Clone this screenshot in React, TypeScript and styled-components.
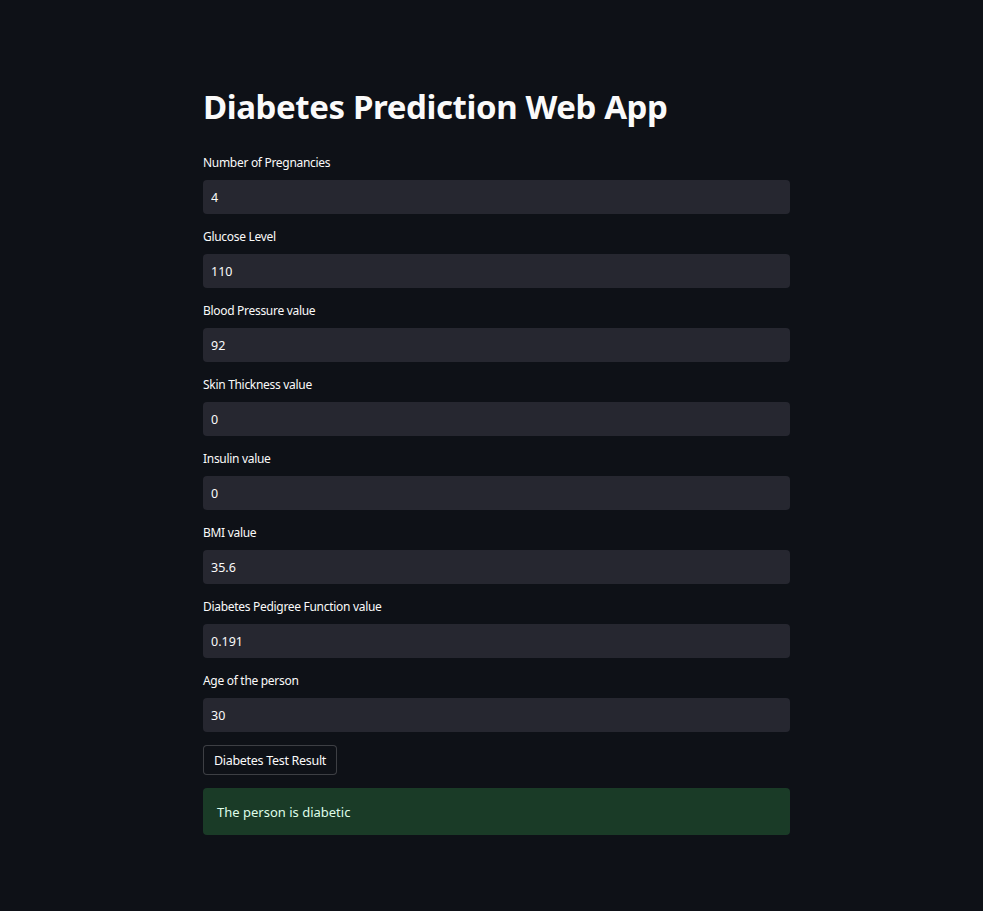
import React from 'react';
import styled, { createGlobalStyle } from 'styled-components';

const GlobalStyle = createGlobalStyle`
  html, body {
    margin: 0;
    padding: 0;
    background: #0e1117;
  }
  body {
    font-family: 'Source Sans Pro', 'Noto Sans', 'Open Sans', sans-serif;
    color: #fafafa;
  }
`;

const Page = styled.main`
  min-height: 911px;
  background: #0e1117;
  display: flex;
  justify-content: center;
`;

const Column = styled.div`
  width: 587px;
  padding: 85px 0 60px;
  margin-left: 10px;
  display: flex;
  flex-direction: column;
`;

const Title = styled.h1`
  margin: 0 0 26px;
  font-size: 33px;
  font-weight: 700;
  line-height: 44px;
  letter-spacing: -0.4px;
  color: #fafafa;
`;

const Field = styled.div`
  display: flex;
  flex-direction: column;
  margin-bottom: 15px;
`;

const Label = styled.label`
  display: block;
  height: 16px;
  font-size: 12px;
  line-height: 16px;
  color: #fafafa;
  margin-bottom: 9px;
  letter-spacing: -0.3px;
`;

const Input = styled.input`
  height: 34px;
  box-sizing: border-box;
  border: none;
  border-radius: 4px;
  background: #262730;
  color: #fafafa;
  padding: 0 8px;
  font-family: 'Noto Sans', sans-serif;
  font-size: 12.5px;
  outline: none;
`;

const Button = styled.button`
  align-self: flex-start;
  height: 30px;
  padding: 0 10px;
  margin-top: -2px;
  border: 1px solid rgba(250, 250, 250, 0.2);
  border-radius: 4px;
  background: #0e1117;
  color: #fafafa;
  font-family: 'Noto Sans', sans-serif;
  font-size: 12.5px;
  letter-spacing: -0.3px;
`;

const Alert = styled.div`
  margin-top: 13px;
  height: 47px;
  box-sizing: border-box;
  padding: 0 14px;
  display: flex;
  align-items: center;
  border-radius: 4px;
  background: #1a3b27;
  color: #dffde9;
  font-size: 13px;
`;

const fields: [string, string][] = [
  ['Number of Pregnancies', '4'],
  ['Glucose Level', '110'],
  ['Blood Pressure value', '92'],
  ['Skin Thickness value', '0'],
  ['Insulin value', '0'],
  ['BMI value', '35.6'],
  ['Diabetes Pedigree Function value', '0.191'],
  ['Age of the person', '30'],
];

export default function App() {
  return (
    <Page>
      <GlobalStyle />
      <Column>
        <Title>Diabetes Prediction Web App</Title>
        {fields.map(([label, value]) => (
          <Field key={label}>
            <Label>{label}</Label>
            <Input defaultValue={value} />
          </Field>
        ))}
        <Button>Diabetes Test Result</Button>
        <Alert>The person is diabetic</Alert>
      </Column>
    </Page>
  );
}
